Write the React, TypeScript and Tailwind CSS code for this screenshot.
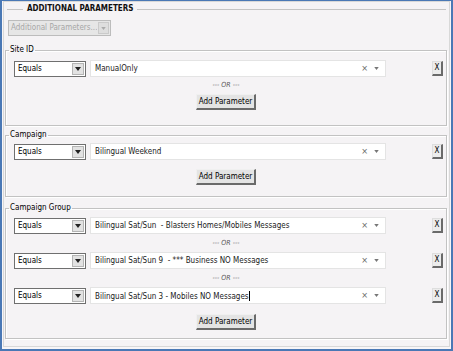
import React from "react";

function SelectBox({ value }: { value: string }) {
  return (
    <div className="flex h-[16px] w-[72px] items-stretch border border-[#6f6f6f] bg-white">
      <div className="flex-1 whitespace-nowrap pl-[3px] text-[8px] leading-[14px] text-black">{value}</div>
      <div className="m-[1px] flex w-[12px] items-center justify-center border border-[#b4b4b4] bg-[#e2e2e2]">
        <svg width="6" height="4" viewBox="0 0 6 4"><path d="M0 0h6L3 4z" fill="#222" /></svg>
      </div>
    </div>
  );
}

function Row({ value, caret }: { value: string; caret?: boolean }) {
  return (
    <div className="flex h-[17px] items-center">
      <div className="ml-[8px]">
        <SelectBox value="Equals" />
      </div>
      <div className="ml-[4px] flex h-[17px] w-[296px] items-center border border-[#e4e4e4] bg-white pl-[4px]">
        <span className="min-w-0 flex-1 overflow-hidden whitespace-pre text-[8px] leading-[12px] text-[#1a1a1a]">
          {value}
          {caret && <span className="inline-block h-[10px] w-px translate-y-[2px] bg-black" />}
        </span>
        <span className="text-[9px] leading-none text-[#666]">×</span>
        <svg className="ml-[6px] mr-[6px]" width="5" height="3" viewBox="0 0 6 4"><path d="M0 0h6L3 4z" fill="#777" /></svg>
      </div>
      <div className="ml-[46px] flex h-[15px] w-[11px] items-center justify-center border-b-2 border-l border-r-2 border-t border-b-[#6a6a6a] border-l-[#dedede] border-r-[#6a6a6a] border-t-[#dedede] bg-[#ececec] text-[8px] leading-none text-black">
        X
      </div>
    </div>
  );
}

function Or({ h }: { h: string }) {
  return (
    <div className={`flex items-center justify-center ${h} text-[7px] italic leading-none text-[#555]`}>
      --- OR ---
    </div>
  );
}

function AddBtn() {
  return (
    <div className="flex justify-center">
      <div className="flex h-[16px] items-center border-b-2 border-l border-r-2 border-t border-b-[#6a6a6a] border-l-[#f0f0f0] border-r-[#6a6a6a] border-t-[#f0f0f0] bg-[#e4e4e4] px-[2px] text-[8px] leading-none text-black">
        Add Parameter
      </div>
    </div>
  );
}

function Group({ title, pt, pb, children }: { title: string; pt: string; pb: string; children: React.ReactNode }) {
  return (
    <fieldset className={`ml-[1px] mr-[2px] border border-[#c2c2c2] shadow-[inset_1px_1px_0_#fff,1px_1px_0_#fff] ${pt} ${pb}`}>
      <legend className="ml-[3px] px-[1px] text-[8px] leading-[12px] text-black">{title}</legend>
      {children}
    </fieldset>
  );
}

export default function App() {
  return (
    <div className="flex h-[351px] w-[453px] flex-col border-x-2 border-b-2 border-t border-[#4a78b5] bg-[#f7f5f7] font-['DejaVu_Sans_Condensed','DejaVu_Sans',sans-serif] font-stretch-condensed">
      <div className="mb-[2px] ml-[1px] mr-[1px] flex-1 border border-[#d8d8d8] bg-[#f5f3f5]">
        <div className="flex h-[14px] items-center">
          <div className="ml-[3px] h-px w-[16px] bg-[#c4c4c4]" />
          <div className="whitespace-nowrap px-[4px] text-[8px] font-bold leading-none text-[#111]">ADDITIONAL PARAMETERS</div>
          <div className="mr-[3px] h-px flex-1 bg-[#c4c4c4]" />
        </div>
        <div className="ml-[4px] mt-[4px] flex h-[16px] w-[103px] items-stretch border border-[#bcbcbc] bg-[#e6e6e6]">
          <div className="flex-1 overflow-hidden whitespace-nowrap pl-[2px] text-[8px] leading-[14px] text-[#a6a6a6]">Additional Parameters...</div>
          <div className="m-[1px] flex w-[11px] items-center justify-center border border-[#cacaca] bg-[#dedede]">
            <svg width="5" height="3" viewBox="0 0 6 4"><path d="M0 0h6L3 4z" fill="#aaa" /></svg>
          </div>
        </div>
        <div className="mt-[8px]">
          <Group title="Site ID" pt="pt-[4px]" pb="pb-[15px]">
            <Row value="ManualOnly" />
            <Or h="h-[17px]" />
            <AddBtn />
          </Group>
          <div className="h-[3px]" />
          <Group title="Campaign" pt="pt-[2px]" pb="pb-[11px]">
            <Row value="Bilingual Weekend" />
            <div className="h-[9px]" />
            <AddBtn />
          </Group>
          <div className="h-[5px]" />
          <Group title="Campaign Group" pt="pt-[3px]" pb="pb-[8px]">
            <Row value="Bilingual Sat/Sun  - Blasters Homes/Mobiles Messages" />
            <Or h="h-[18px]" />
            <Row value="Bilingual Sat/Sun 9  - *** Business NO Messages" />
            <Or h="h-[18px]" />
            <Row value="Bilingual Sat/Sun 3 - Mobiles NO Messages" caret />
            <div className="h-[10px]" />
            <AddBtn />
          </Group>
        </div>
      </div>
    </div>
  );
}
